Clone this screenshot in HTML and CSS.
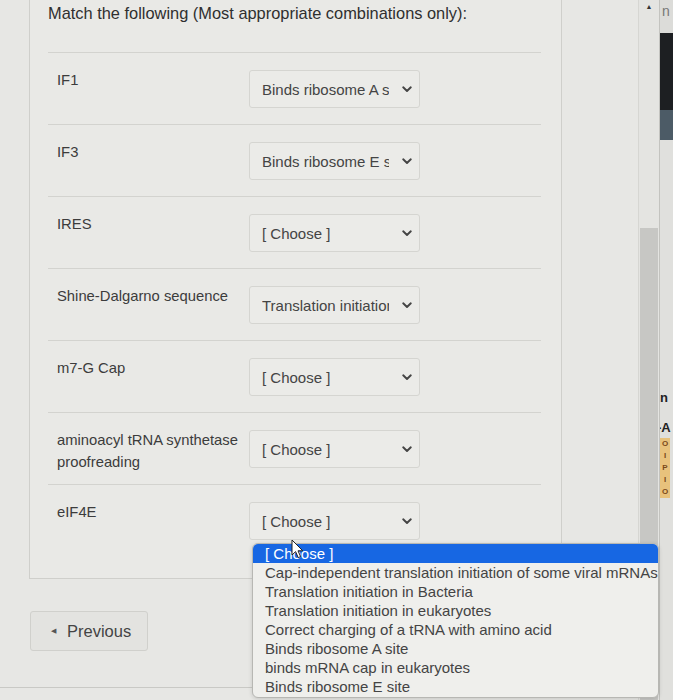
FILE: index.html
```html
<!DOCTYPE html>
<html>
<head>
<meta charset="utf-8">
<link rel="stylesheet" href="styles.css">
</head>
<body>
<div class="screen">
  <main class="content">
    <section class="card">
      <h1 class="title">Match the following (Most appropriate combinations only):</h1>
      <div class="rows">
        <div class="row">
          <div class="label">IF1</div>
          <div class="select"><span class="value">Binds ribosome A site</span><svg class="chev" viewBox="0 0 10 7"><path d="M1.2 1.3 L5 5 L8.8 1.3"/></svg></div>
        </div>
        <div class="row">
          <div class="label">IF3</div>
          <div class="select"><span class="value">Binds ribosome E site</span><svg class="chev" viewBox="0 0 10 7"><path d="M1.2 1.3 L5 5 L8.8 1.3"/></svg></div>
        </div>
        <div class="row">
          <div class="label">IRES</div>
          <div class="select"><span class="value">[ Choose ]</span><svg class="chev" viewBox="0 0 10 7"><path d="M1.2 1.3 L5 5 L8.8 1.3"/></svg></div>
        </div>
        <div class="row">
          <div class="label">Shine-Dalgarno sequence</div>
          <div class="select"><span class="value">Translation initiation in Bacteria</span><svg class="chev" viewBox="0 0 10 7"><path d="M1.2 1.3 L5 5 L8.8 1.3"/></svg></div>
        </div>
        <div class="row">
          <div class="label">m7-G Cap</div>
          <div class="select"><span class="value">[ Choose ]</span><svg class="chev" viewBox="0 0 10 7"><path d="M1.2 1.3 L5 5 L8.8 1.3"/></svg></div>
        </div>
        <div class="row">
          <div class="label">aminoacyl tRNA synthetase proofreading</div>
          <div class="select"><span class="value">[ Choose ]</span><svg class="chev" viewBox="0 0 10 7"><path d="M1.2 1.3 L5 5 L8.8 1.3"/></svg></div>
        </div>
        <div class="row">
          <div class="label">eIF4E</div>
          <div class="select"><span class="value">[ Choose ]</span><svg class="chev" viewBox="0 0 10 7"><path d="M1.2 1.3 L5 5 L8.8 1.3"/></svg></div>
        </div>
      </div>
    </section>
    <div class="nav">
      <button class="prev"><span class="tri">&#9664;</span>Previous</button>
    </div>
    <div class="footer-line"></div>
  </main>
  <div class="scrollbar">
    <div class="arrow-up">&#9650;</div>
    <div class="thumb"></div>
  </div>
  <div class="strip">
    <div class="strip-n">n</div>
    <div class="strip-dark"></div>
    <div class="strip-blue"></div>
    <div class="strip-light">
      <div class="strip-b">n</div>
      <div class="strip-a">-A</div>
      <div class="strip-orange">O<br>I<br>P<br>I<br>O</div>
    </div>
  </div>
</div>

<ul class="dropdown">
  <li class="active">[ Choose ]</li>
  <li>Cap-independent translation initiation of some viral mRNAs</li>
  <li>Translation initiation in Bacteria</li>
  <li>Translation initiation in eukaryotes</li>
  <li>Correct charging of a tRNA with amino acid</li>
  <li>Binds ribosome A site</li>
  <li>binds mRNA cap in eukaryotes</li>
  <li>Binds ribosome E site</li>
</ul>

<svg class="cursor" viewBox="0 0 13 20"><path d="M1 1 L1 16 L4.6 12.6 L7.2 18.6 L9.6 17.6 L7 11.8 L11.8 11.8 Z"/></svg>
</body>
</html>
```

FILE: styles.css
```css
* { box-sizing: border-box; }

html, body {
  margin: 0;
  padding: 0;
}

body {
  width: 673px;
  height: 700px;
  overflow: hidden;
  background: #e7e7e4;
  font-family: "Liberation Sans", Arial, sans-serif;
  color: #3e3e3e;
  position: relative;
}

.screen {
  display: flex;
  height: 700px;
}

.content {
  width: 638px;
  padding-left: 29px;
  display: flex;
  flex-direction: column;
}

.card {
  width: 533px;
  border: 1px solid #cfcfcb;
  border-top: none;
  background: #e9e9e6;
  padding: 0 20px 22px 18px;
}

.title {
  margin: 0;
  padding-top: 3px;
  height: 52px;
  font-size: 16.4px;
  line-height: 20px;
  font-weight: normal;
  color: #2f2f2f;
}

.row {
  height: 72px;
  border-top: 1px solid #d3d3cf;
  padding: 17px 0 0 9px;
  display: flex;
  align-items: flex-start;
}

.label {
  width: 192px;
  flex: 0 0 192px;
  font-size: 14.8px;
  line-height: 22px;
  margin-top: -1px;
  color: #3c3c3c;
}

.select {
  width: 171px;
  height: 38px;
  border: 1px solid #d5d5d1;
  border-radius: 3px;
  background: #ebebe8;
  display: flex;
  align-items: center;
  padding: 0 7px 0 12px;
}

.value {
  width: 127px;
  flex: 0 0 127px;
  overflow: hidden;
  white-space: nowrap;
  font-size: 15px;
  color: #444;
}

.chev {
  width: 10px;
  height: 7px;
  margin-left: auto;
  fill: none;
  stroke: #444;
  stroke-width: 1.9;
  stroke-linecap: round;
  stroke-linejoin: round;
}

.nav {
  padding-top: 32px;
  padding-left: 1px;
}

.prev {
  width: 118px;
  height: 40px;
  border: 1px solid #d0d0cc;
  border-radius: 3px;
  background: #e3e3e0;
  font-family: "Liberation Sans", Arial, sans-serif;
  font-size: 16.5px;
  color: #444;
  display: flex;
  align-items: center;
  padding: 0 0 0 20px;
}

.tri {
  font-size: 7px;
  margin-right: 11px;
  color: #555;
}

.footer-line {
  margin-top: 36px;
  margin-left: -29px;
  border-top: 1px solid #c9c9c5;
}

.scrollbar {
  width: 21px;
  border-left: 1px solid #d6d6d2;
  background: #e4e4e1;
  display: flex;
  flex-direction: column;
  align-items: center;
}

.arrow-up {
  font-size: 7px;
  line-height: 8px;
  margin-top: 3px;
  color: #333;
}

.thumb {
  margin-top: 217px;
  width: 18px;
  flex: 1;
  background: #c7c7c4;
}

.strip {
  width: 14px;
  display: flex;
  flex-direction: column;
  background: #dcdcd9;
  border-left: 1px solid #c3c3bf;
  overflow: hidden;
}

.strip-n {
  height: 33px;
  font-size: 14px;
  color: #777;
  padding: 3px 0 0 2px;
}

.strip-dark {
  height: 77px;
  background: #1d1f22;
}

.strip-blue {
  height: 30px;
  background: #4c5b66;
}

.strip-light {
  flex: 1;
  background: #e0e0dd;
  padding-top: 250px;
  font-weight: bold;
  font-size: 13px;
  color: #222;
}

.strip-b {
  height: 30px;
}

.strip-a {
  height: 18px;
  margin-left: -3px;
}

.strip-orange {
  width: 10px;
  background: #e8c27c;
  font-size: 8px;
  line-height: 12px;
  color: #7a4a1a;
  text-align: center;
}

.dropdown {
  position: absolute;
  left: 252px;
  top: 543px;
  width: 407px;
  height: 155px;
  margin: 0;
  padding: 1px 0 0 0;
  list-style: none;
  background: #efefec;
  border: 1px solid #b7b7b3;
  border-radius: 6px;
  box-shadow: 0 1px 4px rgba(0,0,0,0.15);
  overflow: hidden;
  font-size: 15px;
  color: #444;
}

.dropdown li {
  height: 19px;
  line-height: 19px;
  padding-left: 12px;
  white-space: nowrap;
}

.dropdown li.active {
  background: #1767e3;
  color: #fff;
  border-radius: 5px 5px 0 0;
  margin: -1px -1px 0 -1px;
  padding-left: 13px;
}

.cursor {
  position: absolute;
  left: 291px;
  top: 539px;
  width: 13px;
  height: 20px;
  fill: #fff;
  stroke: #222;
  stroke-width: 1;
  stroke-linejoin: round;
}
```
